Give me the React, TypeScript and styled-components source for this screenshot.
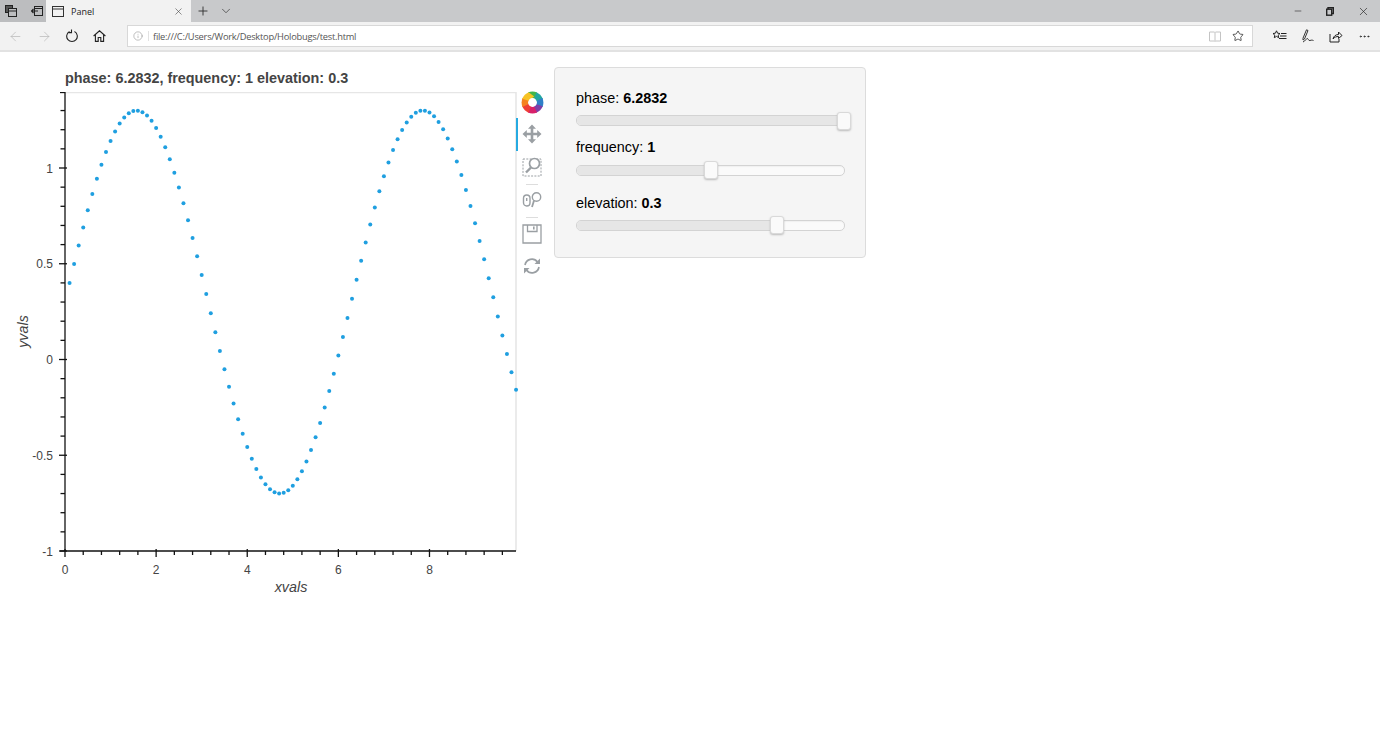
import React from 'react';
import styled, { createGlobalStyle } from 'styled-components';
import { ArrowLeft, ArrowRight, Info, Star, Plus, ChevronDown, X, Minus, MoreHorizontal } from 'lucide-react';

const Global = createGlobalStyle`
  html, body { margin: 0; padding: 0; background: #fff; }
  body { font-family: "Liberation Sans", Arial, sans-serif; width: 1380px; height: 746px; overflow: hidden; }
`;

const TabBar = styled.div`
  display: flex; align-items: stretch; height: 22px; background: #c8c9cb;
`;
const TabActions = styled.div`
  display: flex; align-items: center; gap: 14px; padding-left: 5px; width: 41px; background: #bcbdbf; color: #222;
`;
const Tab = styled.div`
  display: flex; align-items: center; width: 145px; background: #f2f2f2; padding-left: 6px; box-sizing: border-box;
  font-size: 9px; color: #222; gap: 7px;
`;
const TabTitle = styled.span`flex: 1; font-family: "Open Sans", "Liberation Sans", sans-serif;`;
const TabClose = styled.span`display: flex; margin-right: 7px; color: #444;`;
const TabExtras = styled.div`
  display: flex; align-items: center; gap: 9px; padding-left: 5px; color: #333; flex: 1;
`;
const WindowButtons = styled.div`
  display: flex; align-items: center; gap: 23px; padding-right: 10px; color: #222;
`;
const ToolBar = styled.div`
  display: flex; align-items: center; height: 28px; background: #f2f2f2; border-bottom: 2px solid #e2e2e2; padding: 0 0 0 8px;
`;
const NavGroup = styled.div`display: flex; align-items: center; gap: 14px; width: 119px; flex: none;`;
const NavSlot = styled.span<{ $dim?: boolean }>`display: flex; color: ${p => (p.$dim ? '#b4b4b4' : '#222')};`;
const AddressBar = styled.div`
  width: 1126px; height: 22px; box-sizing: border-box; background: #fff; border: 1px solid #d8d8d8;
  display: flex; align-items: center; padding: 0 8px 0 5px; flex: none;
`;
const InfoSlot = styled.span`display: flex; color: #8a8a8a; padding-right: 5px; margin-right: 4px; border-right: 1px solid #e2e2e2;`;
const Url = styled.span`flex: 1; font-size: 9.3px; color: #555; font-family: "Open Sans", "Liberation Sans", sans-serif; letter-spacing: -0.025em;`;
const AddressIcons = styled.div`display: flex; align-items: center; gap: 11px; color: #222;`;
const RightIcons = styled.div`display: flex; align-items: center; gap: 15px; padding-left: 20px; color: #222;`;

const Content = styled.div`
  display: flex; align-items: flex-start; padding-top: 15px;
`;
const Figure = styled.div`
  display: flex; flex-direction: column; width: 516px; flex: none;
`;
const PlotTitle = styled.div`
  font-size: 14.4px; font-weight: 700; color: #444; padding-left: 65px; line-height: 22px; height: 25px; white-space: nowrap;
`;
const ToolColumn = styled.div`
  position: relative; display: flex; flex-direction: column; align-items: center; width: 32px; padding-top: 21px; flex: none;
`;
const ActiveBar = styled.div`
  position: absolute; left: 0; top: 51px; width: 2px; height: 33px; background: #26aae1;
`;
const ToolSlot = styled.div<{ $h: number }>`
  height: ${p => p.$h}px; display: flex; align-items: center; justify-content: center;
`;
const ToolSep = styled.div`
  width: 12px; height: 1px; background: #ddd;
`;

const Panel = styled.div`
  margin-left: 6px; width: 312px; height: 191px; box-sizing: border-box; background: #f5f5f5; border: 1px solid #dcdcdc; border-radius: 4px;
  padding: 21px 20px 0 21px; display: flex; flex-direction: column; flex: none;
`;
const SliderRow = styled.div<{ $gap: number }>`
  display: flex; flex-direction: column; margin-bottom: ${p => p.$gap}px;
`;
const SliderLabel = styled.div`
  font-size: 14.4px; line-height: 18px; color: #000; height: 18px; white-space: nowrap;
  b { font-weight: 700; }
`;
const Track = styled.div<{ $top: number }>`
  position: relative; margin-top: ${p => p.$top}px; width: 269px; height: 11px; box-sizing: border-box; border-radius: 5px;
  background: #fafafa; border: 1px solid #d3d3d3; box-shadow: inset 0 1px 1px #f0f0f0;
`;
const Fill = styled.div`
  height: 100%; background: #e6e6e6; border-radius: 4px 0 0 4px;
`;
const Handle = styled.div<{ $top: number }>`
  position: absolute; top: ${p => p.$top}px; width: 14px; height: 18px; box-sizing: border-box; background: #fafafa;
  border: 1px solid #d9d9d9; border-radius: 3px; box-shadow: 0 1px 2px #bbb;
`;

const W = 520, H = 520;
const X0 = 65, PX = 45.56, Y1 = 76, PY = 191.5;
const sx = (x: number) => X0 + x * PX;
const sy = (y: number) => Y1 + (1 - y) * PY;
const points = Array.from({ length: 99 }, (_, i) => {
  const x = (i + 1) / 10;
  return { x, y: 0.3 + Math.sin(x + 6.2832) };
});
const xTicks = [0, 2, 4, 6, 8];
const xMinor = Array.from({ length: 50 }, (_, i) => i * 0.4).filter(v => v <= 9.85 && Math.abs(v / 2 - Math.round(v / 2)) > 0.01);
const yMajor = [-1, -0.5, 0, 0.5, 1];
const yMinor = Array.from({ length: 24 }, (_, i) => -1 + i * 0.1).filter(v => v < 1.39 && Math.abs(v * 2 - Math.round(v * 2)) > 0.01);

const Plot = () => (
  <svg width={W} height={H} viewBox={`0 0 ${W} ${H}`} style={{ display: 'block' }}>
    <path d={`M65 0.5H516V${sy(-1)}`} fill="none" stroke="#e6e6e6" strokeWidth="1.6" />
    <g fill="#1f9fe0">
      {points.map(p => <circle key={p.x} cx={sx(p.x)} cy={sy(p.y)} r="2" />)}
    </g>
    <g stroke="#111" strokeWidth="1.3" fill="none">
      <path d={`M65 0V${sy(-1)}`} />
      <path d="M60 0.5H65" />
      <path d={`M60 ${sy(-1)}H516`} />
      {xTicks.map(v => <path key={v} d={`M${sx(v)} ${sy(-1) - 2}V${sy(-1) + 6}`} />)}
      {xMinor.map(v => <path key={v} d={`M${sx(v)} ${sy(-1)}V${sy(-1) + 4}`} />)}
      {yMajor.map(v => <path key={v} d={`M59 ${sy(v)}H67`} />)}
      {yMinor.map(v => <path key={v} d={`M60.5 ${sy(v)}H65`} />)}
    </g>
    <g fontFamily='"Liberation Sans", sans-serif' fontSize="12" fill="#444">
      {xTicks.map(v => <text key={v} x={sx(v)} y={sy(-1) + 23} textAnchor="middle">{v}</text>)}
      {yMajor.map(v => <text key={v} x="53" y={sy(v) + 4.5} textAnchor="end">{v}</text>)}
    </g>
    <g fontFamily='"Liberation Sans", sans-serif' fontSize="14.3" fontStyle="italic" fill="#444">
      <text x="291" y={sy(-1) + 41} textAnchor="middle">xvals</text>
      <text transform={`translate(28 ${sy(0) - 28}) rotate(-90)`} textAnchor="middle">yvals</text>
    </g>
  </svg>
);

const BokehLogo = () => {
  const colors = ['#43b649', '#22a7a0', '#2f7fc8', '#7d3fa8', '#d8206a', '#ee3e36', '#f58220', '#f7c325'];
  return (
    <svg width="23" height="23" viewBox="-11.5 -11.5 23 23">
      {colors.map((c, i) => (
        <path key={c} d="M-4.6 -10 Q0 -11.8 4.6 -10 L5.4 -3 L-1.6 -4 Z" fill={c} transform={`rotate(${i * 45})`} />
      ))}
      <circle r="4.4" fill="#fff" />
    </svg>
  );
};
const PanIcon = () => (
  <svg width="20" height="20" viewBox="0 0 20 20" fill="#9a9fa3">
    <path d="M10 0.5 14 4.8H11.3V8.7H15.2V6L19.5 10 15.2 14V11.3H11.3V15.2H14L10 19.5 6 15.2H8.7V11.3H4.8V14L.5 10 4.8 6V8.7H8.7V4.8H6Z" />
  </svg>
);
const BoxZoomIcon = () => (
  <svg width="20" height="20" viewBox="0 0 20 20" fill="none" stroke="#9a9fa3" style={{ marginTop: -2 }}>
    <rect x="1" y="2" width="18" height="17" strokeDasharray="2 1.3" strokeWidth="1" />
    <circle cx="12.5" cy="6.5" r="5" fill="#fff" strokeWidth="1.7" />
    <path d="M9 10.5 4 15.5" strokeWidth="2.4" />
  </svg>
);
const WheelZoomIcon = () => (
  <svg width="20" height="18" viewBox="0 0 20 18" fill="none" stroke="#9a9fa3" strokeWidth="1.4" style={{ marginTop: -2 }}>
    <rect x="1.5" y="4" width="6.5" height="11" rx="3.2" />
    <path d="M4.7 7v3" />
    <circle cx="14.5" cy="6" r="4.2" />
    <path d="M12 9.5 10 16" strokeWidth="1.8" />
  </svg>
);
const SaveIcon = () => (
  <svg width="20" height="20" viewBox="0 0 20 20" fill="none" stroke="#9a9fa3" strokeWidth="1.3">
    <path d="M1 1H19V19H1Z" />
    <path d="M5.5 1V7.5H15V1" />
    <rect x="11" y="2.5" width="1.6" height="3" fill="#9a9fa3" stroke="none" />
  </svg>
);
const ResetIcon = () => (
  <svg width="18" height="18" viewBox="0 0 18 18" fill="none" stroke="#9a9fa3" strokeWidth="1.7">
    <path d="M2 8A7 7 0 0 1 14.5 5" />
    <path d="M16 10A7 7 0 0 1 3.5 13" />
    <path d="M17 1.5V7H11.5Z" fill="#9a9fa3" stroke="none" />
    <path d="M1 16.5V11H6.5Z" fill="#9a9fa3" stroke="none" />
  </svg>
);

const TabsIcon = () => (
  <svg width="12" height="12" viewBox="0 0 12 12" fill="none" stroke="#222">
    <rect x="0.5" y="0.5" width="7" height="7" fill="#555" />
    <rect x="3.5" y="3.5" width="8" height="8" fill="#bcbdbf" />
    <path d="M3.5 6H11.5" />
  </svg>
);
const AsideIcon = () => (
  <svg width="12" height="10" viewBox="0 0 12 10" fill="none" stroke="#222">
    <rect x="3.5" y="0.5" width="8" height="9" />
    <path d="M3.5 2.5H11.5" />
    <path d="M0 5H7M2.5 3 .5 5l2 2" strokeWidth="1.2" />
  </svg>
);
const TabPageIcon = () => (
  <svg width="12" height="11" viewBox="0 0 12 11" fill="none" stroke="#333">
    <rect x="0.5" y="0.5" width="11" height="10" />
    <path d="M.5 3H11.5" />
  </svg>
);
const RestoreIcon = () => (
  <svg width="8" height="9" viewBox="0 0 8 9" fill="none" stroke="#222">
    <rect x="0.7" y="2.2" width="5" height="6" fill="#c8c9cb" strokeWidth="1.4" />
    <path d="M2 2V.7H7.3V6.5H6" strokeWidth="1.4" />
  </svg>
);
const ReloadIcon = () => (
  <svg width="13" height="14" viewBox="0 0 13 14" fill="none" stroke="#222" strokeWidth="1.1">
    <path d="M8.5 2.6A5.3 5.3 0 1 1 3.5 2.6" />
    <path d="M5.5 .4V3.6H2.3" />
  </svg>
);
const HomeIcon = () => (
  <svg width="13" height="12" viewBox="0 0 13 12" fill="none" stroke="#222" strokeWidth="1.1">
    <path d="M.6 6 6.5 .8 12.4 6M2.4 4.8V11.4H5.2V7.5H7.8V11.4H10.6V4.8" />
  </svg>
);
const ReadingIcon = () => (
  <svg width="12" height="11" viewBox="0 0 12 11" fill="none" stroke="#c4c4c4">
    <path d="M.5 1H5.5L6 1.5 6.5 1H11.5V10H6.5L6 10.5 5.5 10H.5ZM6 1.5V10" />
  </svg>
);
const HubIcon = () => (
  <svg width="14" height="12" viewBox="0 0 14 12" fill="none" stroke="#222">
    <path d="M3.5 0.8 4.6 3.2 7 3.5 5.2 5.2 5.7 7.7 3.5 6.4 1.3 7.7 1.8 5.2 0 3.5 2.4 3.2Z" />
    <path d="M8 3.5H13.5M7 6H13.5M6 8.5H13.5" />
  </svg>
);
const PenIcon = () => (
  <svg width="12" height="14" viewBox="0 0 12 14" fill="none" stroke="#333">
    <path d="M4.5 .8 6 1.5 2.5 10 1 11 1 9.2Z" />
    <path d="M1 13C3.5 12 4.5 9 5.5 9.5S6.5 12 8 11.5 10 11 11.5 11.5" />
  </svg>
);
const ShareIcon = () => (
  <svg width="14" height="13" viewBox="0 0 14 13" fill="none" stroke="#222">
    <path d="M1 4V12H10V9" />
    <path d="M4 9C4.5 6 7 4.5 9.5 4.5V2L13 5.5 9.5 8.5V6.5C7.5 6.5 5.5 7 4 9Z" />
  </svg>
);

const sliders = [
  { name: 'phase', value: '6.2832', fill: 100, handle: 260, handleTop: -4, top: 8, gap: 12 },
  { name: 'frequency', value: '1', fill: 50, handle: 127, handleTop: -5, top: 9, gap: 18 },
  { name: 'elevation', value: '0.3', fill: 75, handle: 193, handleTop: -5, top: 8, gap: 0 },
];

export default function App() {
  return (
    <>
      <Global />
      <TabBar>
        <TabActions><TabsIcon /><AsideIcon /></TabActions>
        <Tab>
          <TabPageIcon />
          <TabTitle>Panel</TabTitle>
          <TabClose><X size={11} strokeWidth={1.3} /></TabClose>
        </Tab>
        <TabExtras>
          <Plus size={14} strokeWidth={1.6} />
          <ChevronDown size={14} strokeWidth={1.2} />
        </TabExtras>
        <WindowButtons>
          <Minus size={10} strokeWidth={1.4} />
          <RestoreIcon />
          <X size={13} strokeWidth={1.2} />
        </WindowButtons>
      </TabBar>
      <ToolBar>
        <NavGroup>
          <NavSlot $dim><ArrowLeft size={15} strokeWidth={1.1} /></NavSlot>
          <NavSlot $dim><ArrowRight size={15} strokeWidth={1.1} /></NavSlot>
          <NavSlot><ReloadIcon /></NavSlot>
          <NavSlot><HomeIcon /></NavSlot>
        </NavGroup>
        <AddressBar>
          <InfoSlot><Info size={10} strokeWidth={1.3} /></InfoSlot>
          <Url>file:///C:/Users/Work/Desktop/Holobugs/test.html</Url>
          <AddressIcons><ReadingIcon /><Star size={12} strokeWidth={1.5} /></AddressIcons>
        </AddressBar>
        <RightIcons>
          <HubIcon /><PenIcon /><ShareIcon /><MoreHorizontal size={13} strokeWidth={1.5} />
        </RightIcons>
      </ToolBar>
      <Content>
        <Figure>
          <PlotTitle>phase: 6.2832, frequency: 1 elevation: 0.3</PlotTitle>
          <Plot />
        </Figure>
        <ToolColumn>
          <ActiveBar />
          <ToolSlot $h={28}><BokehLogo /></ToolSlot>
          <ToolSlot $h={36}><PanIcon /></ToolSlot>
          <ToolSlot $h={32}><BoxZoomIcon /></ToolSlot>
          <ToolSep />
          <ToolSlot $h={32}><WheelZoomIcon /></ToolSlot>
          <ToolSep />
          <ToolSlot $h={32}><SaveIcon /></ToolSlot>
          <ToolSlot $h={32}><ResetIcon /></ToolSlot>
        </ToolColumn>
        <Panel>
          {sliders.map(s => (
            <SliderRow key={s.name} $gap={s.gap}>
              <SliderLabel>{s.name}: <b>{s.value}</b></SliderLabel>
              <Track $top={s.top}>
                <Fill style={{ width: `${s.fill}%` }} />
                <Handle $top={s.handleTop} style={{ left: s.handle }} />
              </Track>
            </SliderRow>
          ))}
        </Panel>
      </Content>
    </>
  );
}
